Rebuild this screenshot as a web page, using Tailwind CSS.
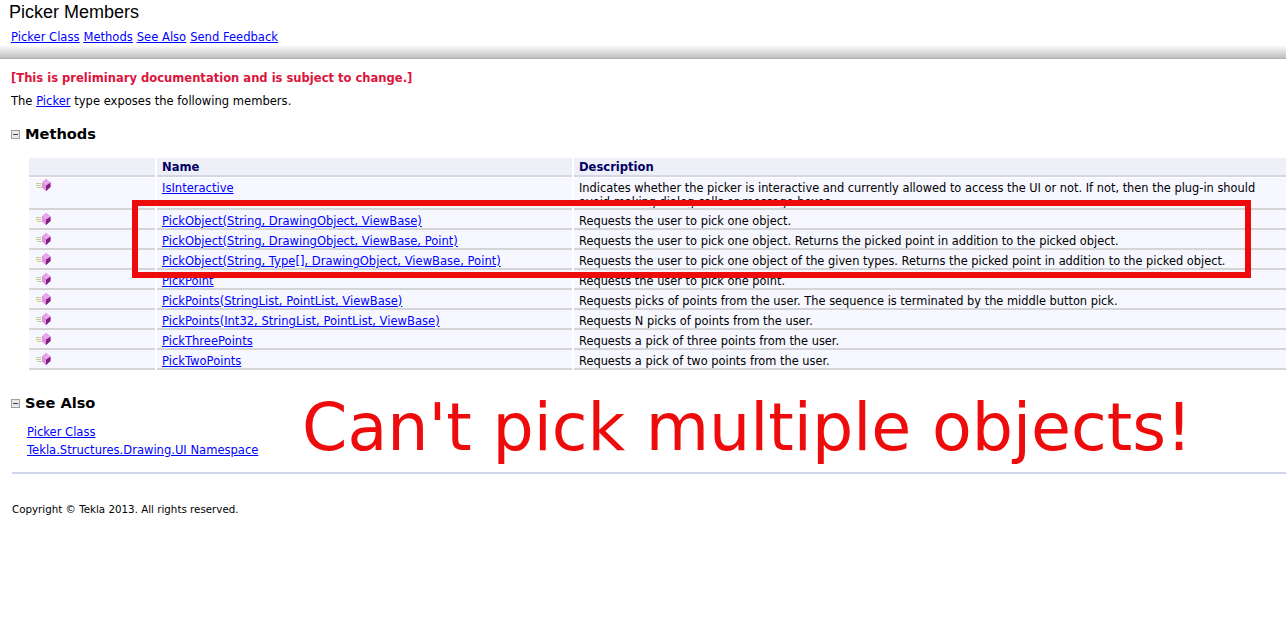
<!DOCTYPE html>
<html lang="en">
<head>
    <meta charset="UTF-8">
    <title>Picker Members</title>
    <script src="https://cdn.jsdelivr.net/npm/@tailwindcss/browser@4"></script>
</head>
<body class="bg-white text-black font-['DejaVu_Sans',sans-serif] text-[11.55px] leading-[14px] h-[627px] overflow-hidden relative">
    <!-- banner -->
    <div class="h-[45px] pl-[9px] pt-[3px]">
        <h1 class="font-['Liberation_Sans',sans-serif] text-[18px] leading-[18px]">Picker Members</h1>
        <div class="flex gap-[4px] pl-[2px] mt-[9px] text-[#0000ff] underline">
            <a href="#">Picker Class</a>
            <a href="#">Methods</a>
            <a href="#">See Also</a>
            <a href="#">Send Feedback</a>
        </div>
    </div>
    <div class="h-[14px] bg-gradient-to-b from-white to-[#c0c0c0] border-b border-[#b0b0b0]"></div>

    <div class="pl-[11px]">
        <p class="mt-[12px] font-bold text-[#dc143c]">[This is preliminary documentation and is subject to change.]</p>
        <p class="mt-[9px]">The <a href="#" class="text-[#0000ff] underline">Picker</a> type exposes the following members.</p>

        <h2 class="mt-[17px] flex items-center gap-[5px] font-bold text-[14.6px] leading-[18px]">
            <svg width="9" height="9" viewBox="0 0 9 9"><rect x="0.5" y="0.5" width="8" height="8" fill="#e8e8e8" stroke="#a0a0a0"/><path d="M2 4.5h5" stroke="#444"/></svg>
            Methods
        </h2>

        <!-- member table -->
        <div class="mt-[15px] ml-[18px] grid grid-cols-[126px_415px_1fr] gap-x-[2px]">
            <div class="h-[19px] bg-[#efeff7] border-b-2 border-[#d5d5e3]"></div>
            <div class="h-[19px] bg-[#efeff7] border-b-2 border-[#d5d5e3] pl-[5px] pt-[2px] font-bold text-[#000066]">Name</div>
            <div class="h-[19px] bg-[#efeff7] border-b-2 border-[#d5d5e3] pl-[5px] pt-[2px] font-bold text-[#000066]">Description</div>

            <div class="h-[32px] mt-[1px] bg-[#f7f7ff] border-b-2 border-[#d5d5d5] pl-[7px] pt-[1px]"><svg class="block" width="16" height="12" viewBox="0 0 16 12"><use href="#method"/></svg></div>
            <div class="h-[32px] mt-[1px] bg-[#f7f7ff] border-b-2 border-[#d5d5d5] pl-[5px] pt-[3px]"><a href="#" class="text-[#0000ff] underline">IsInteractive</a></div>
            <div class="h-[32px] mt-[1px] bg-[#f7f7ff] border-b-2 border-[#d5d5d5] pl-[5px] pt-[3px] overflow-hidden text-[11.4px]">Indicates whether the picker is interactive and currently allowed to access the UI or not. If not, then the plug-in should avoid making dialog calls or message boxes.</div>

            <div class="h-[20px] bg-[#f7f7ff] border-b-2 border-[#d5d5d5] pl-[7px] pt-[3px]"><svg class="block" width="16" height="12" viewBox="0 0 16 12"><use href="#method"/></svg></div>
            <div class="h-[20px] bg-[#f7f7ff] border-b-2 border-[#d5d5d5] pl-[5px] pt-[4px]"><a href="#" class="text-[#0000ff] underline">PickObject(String, DrawingObject, ViewBase)</a></div>
            <div class="h-[20px] bg-[#f7f7ff] border-b-2 border-[#d5d5d5] pl-[5px] pt-[4px] text-[11.4px]">Requests the user to pick one object.</div>

            <div class="h-[20px] bg-[#f7f7ff] border-b-2 border-[#d5d5d5] pl-[7px] pt-[3px]"><svg class="block" width="16" height="12" viewBox="0 0 16 12"><use href="#method"/></svg></div>
            <div class="h-[20px] bg-[#f7f7ff] border-b-2 border-[#d5d5d5] pl-[5px] pt-[4px]"><a href="#" class="text-[#0000ff] underline">PickObject(String, DrawingObject, ViewBase, Point)</a></div>
            <div class="h-[20px] bg-[#f7f7ff] border-b-2 border-[#d5d5d5] pl-[5px] pt-[4px] text-[11.4px]">Requests the user to pick one object. Returns the picked point in addition to the picked object.</div>

            <div class="h-[20px] bg-[#f7f7ff] border-b-2 border-[#d5d5d5] pl-[7px] pt-[3px]"><svg class="block" width="16" height="12" viewBox="0 0 16 12"><use href="#method"/></svg></div>
            <div class="h-[20px] bg-[#f7f7ff] border-b-2 border-[#d5d5d5] pl-[5px] pt-[4px]"><a href="#" class="text-[#0000ff] underline">PickObject(String, Type[], DrawingObject, ViewBase, Point)</a></div>
            <div class="h-[20px] bg-[#f7f7ff] border-b-2 border-[#d5d5d5] pl-[5px] pt-[4px] text-[11.4px]">Requests the user to pick one object of the given types. Returns the picked point in addition to the picked object.</div>

            <div class="h-[20px] bg-[#f7f7ff] border-b-2 border-[#d5d5d5] pl-[7px] pt-[3px]"><svg class="block" width="16" height="12" viewBox="0 0 16 12"><use href="#method"/></svg></div>
            <div class="h-[20px] bg-[#f7f7ff] border-b-2 border-[#d5d5d5] pl-[5px] pt-[4px]"><a href="#" class="text-[#0000ff] underline">PickPoint</a></div>
            <div class="h-[20px] bg-[#f7f7ff] border-b-2 border-[#d5d5d5] pl-[5px] pt-[4px] text-[11.4px]">Requests the user to pick one point.</div>

            <div class="h-[20px] bg-[#f7f7ff] border-b-2 border-[#d5d5d5] pl-[7px] pt-[3px]"><svg class="block" width="16" height="12" viewBox="0 0 16 12"><use href="#method"/></svg></div>
            <div class="h-[20px] bg-[#f7f7ff] border-b-2 border-[#d5d5d5] pl-[5px] pt-[4px]"><a href="#" class="text-[#0000ff] underline">PickPoints(StringList, PointList, ViewBase)</a></div>
            <div class="h-[20px] bg-[#f7f7ff] border-b-2 border-[#d5d5d5] pl-[5px] pt-[4px] text-[11.4px]">Requests picks of points from the user. The sequence is terminated by the middle button pick.</div>

            <div class="h-[20px] bg-[#f7f7ff] border-b-2 border-[#d5d5d5] pl-[7px] pt-[3px]"><svg class="block" width="16" height="12" viewBox="0 0 16 12"><use href="#method"/></svg></div>
            <div class="h-[20px] bg-[#f7f7ff] border-b-2 border-[#d5d5d5] pl-[5px] pt-[4px]"><a href="#" class="text-[#0000ff] underline">PickPoints(Int32, StringList, PointList, ViewBase)</a></div>
            <div class="h-[20px] bg-[#f7f7ff] border-b-2 border-[#d5d5d5] pl-[5px] pt-[4px] text-[11.4px]">Requests N picks of points from the user.</div>

            <div class="h-[20px] bg-[#f7f7ff] border-b-2 border-[#d5d5d5] pl-[7px] pt-[3px]"><svg class="block" width="16" height="12" viewBox="0 0 16 12"><use href="#method"/></svg></div>
            <div class="h-[20px] bg-[#f7f7ff] border-b-2 border-[#d5d5d5] pl-[5px] pt-[4px]"><a href="#" class="text-[#0000ff] underline">PickThreePoints</a></div>
            <div class="h-[20px] bg-[#f7f7ff] border-b-2 border-[#d5d5d5] pl-[5px] pt-[4px] text-[11.4px]">Requests a pick of three points from the user.</div>

            <div class="h-[20px] bg-[#f7f7ff] border-b-2 border-[#d5d5d5] pl-[7px] pt-[3px]"><svg class="block" width="16" height="12" viewBox="0 0 16 12"><use href="#method"/></svg></div>
            <div class="h-[20px] bg-[#f7f7ff] border-b-2 border-[#d5d5d5] pl-[5px] pt-[4px]"><a href="#" class="text-[#0000ff] underline">PickTwoPoints</a></div>
            <div class="h-[20px] bg-[#f7f7ff] border-b-2 border-[#d5d5d5] pl-[5px] pt-[4px] text-[11.4px]">Requests a pick of two points from the user.</div>
        </div>

        <h2 class="mt-[24px] flex items-center gap-[5px] font-bold text-[14.6px] leading-[18px]">
            <svg width="9" height="9" viewBox="0 0 9 9"><rect x="0.5" y="0.5" width="8" height="8" fill="#e8e8e8" stroke="#a0a0a0"/><path d="M2 4.5h5" stroke="#444"/></svg>
            See Also
        </h2>
        <div class="mt-[13px] pl-[16px] flex flex-col gap-[4px] text-[#0000ff]">
            <a href="#" class="underline">Picker Class</a>
            <a href="#" class="underline">Tekla.Structures.Drawing.UI Namespace</a>
        </div>
        <div class="mt-[15px] ml-[1px] h-[2px] bg-[#d0d4ee]"></div>
        <p class="mt-[28px] ml-[1px] text-[10.3px]">Copyright © Tekla 2013. All rights reserved.</p>
    </div>

    <!-- annotation drawn over the page -->
    <div class="absolute left-[132px] top-[200px] w-[1119px] h-[78px] border-[6px] border-[#ee0b0b]"></div>
    <div class="absolute left-[302px] top-[385px] text-[65px] leading-[86px] text-[#ee0b0b] whitespace-nowrap">Can't pick multiple objects!</div>

    <svg class="hidden">
        <defs>
            <g id="method">
                <path d="M0 4.5h5M0 6.5h5M1 8.5h5" stroke="#c8c888" stroke-width="1"/>
                <path d="M10 0L14.5 3.5V8L10 12L6 8V3.5Z" fill="#d070d0"/>
                <path d="M6 3.5L10 6.5V12L6 8Z" fill="#e090e0"/>
                <path d="M10 6.5L14.5 3.5V8L10 12Z" fill="#802080"/>
                <path d="M10 0L14.5 3.5L10 6.5L6 3.5Z" fill="#e8a8ec"/>
            </g>
        </defs>
    </svg>
</body>
</html>
